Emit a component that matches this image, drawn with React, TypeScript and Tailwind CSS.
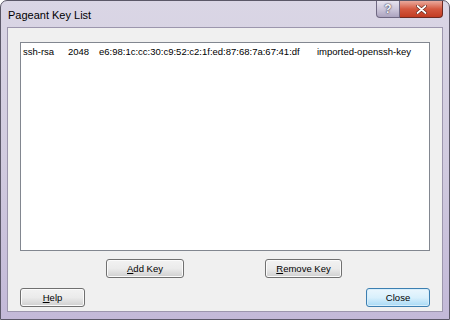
import React from 'react'

const font = { fontFamily: '"Liberation Sans", Arial, sans-serif' }

function WinButton({ label, accel, width, primary }: { label: string; accel?: number; width: string; primary?: boolean }) {
  const chars = label.split('')
  return (
    <button
      className={
        'h-[19px] rounded-[3px] border text-[9.5px] text-black leading-none flex items-center justify-center ' +
        width +
        (primary
          ? ' border-[#3c7fb1] bg-gradient-to-b from-[#eaf6fd] via-[#d9f0fc] to-[#a7d9f5] shadow-[inset_0_0_0_1px_#d8eefb]'
          : ' border-[#707070] bg-gradient-to-b from-[#f2f2f2] via-[#ebebeb] to-[#cfcfcf] shadow-[inset_0_0_0_1px_#fbfbfb]')
      }
    >
      {chars.map((c, i) => (
        <span key={i} className={i === accel ? 'underline underline-offset-1' : ''}>
          {c === ' ' ? '\u00a0' : c}
        </span>
      ))}
    </button>
  )
}

export default function App() {
  return (
    <div className="w-[450px] h-[320px] bg-white" style={font}>
      <div className="w-[450px] h-[320px] flex flex-col rounded-t-[7px] border border-[#5b5868] bg-gradient-to-b from-[#dad6e5] via-[#d1cbdf] to-[#c3b9d8] overflow-hidden">
        <div className="h-[26px] flex items-start pl-[7px] pr-[6px]">
          <span className="mt-[6px] text-[11px] text-black">Pageant Key List</span>
          <div className="ml-auto flex">
            <div className="w-[24px] h-[17px] rounded-bl-[4px] border border-t-0 border-[#6f6882] bg-gradient-to-b from-[#e6e3ee] via-[#cdc7da] to-[#aca4bf] flex items-center justify-center text-[12px] font-bold text-[#f6f6fa] [text-shadow:0_0_1px_#3d3850,0_0_2px_#3d3850]">
              ?
            </div>
            <div className="w-[43px] h-[17px] rounded-br-[4px] border border-t-0 border-l-0 border-[#6e2a22] bg-gradient-to-b from-[#e9a99d] via-[#d4583f] to-[#c23c22] flex items-center justify-center">
              <svg width="11" height="9" viewBox="0 0 11 9">
                <path d="M1.5 1 L9.5 8 M9.5 1 L1.5 8" stroke="#5a1c12" strokeWidth="3" strokeLinecap="round" />
                <path d="M1.5 1 L9.5 8 M9.5 1 L1.5 8" stroke="#ffffff" strokeWidth="1.8" strokeLinecap="round" />
              </svg>
            </div>
          </div>
        </div>
        <div className="mx-[6px] mb-[7px] flex-1 flex flex-col border border-[#9c96ad] bg-[#f0f0f0] px-[12px] pt-[14px]">
          <div className="h-[209px] border border-[#828790] bg-white px-[1px] pt-[3px]">
            <div className="flex text-[9.5px] leading-[12px] text-black">
              <span className="w-[46px] pl-[1px]">ssh-rsa</span>
              <span className="w-[31px]">2048</span>
              <span className="w-[218px]">e6:98:1c:cc:30:c9:52:c2:1f:ed:87:68:7a:67:41:df</span>
              <span>imported-openssh-key</span>
            </div>
          </div>
          <div className="mt-[8px] flex">
            <div className="ml-[86px]">
              <WinButton label="Add Key" accel={0} width="w-[78px]" />
            </div>
            <div className="ml-[81px]">
              <WinButton label="Remove Key" accel={0} width="w-[77px]" />
            </div>
          </div>
          <div className="mt-[10px] flex justify-between">
            <WinButton label="Help" accel={0} width="w-[65px]" />
            <WinButton label="Close" width="w-[64px]" primary />
          </div>
        </div>
      </div>
    </div>
  )
}
